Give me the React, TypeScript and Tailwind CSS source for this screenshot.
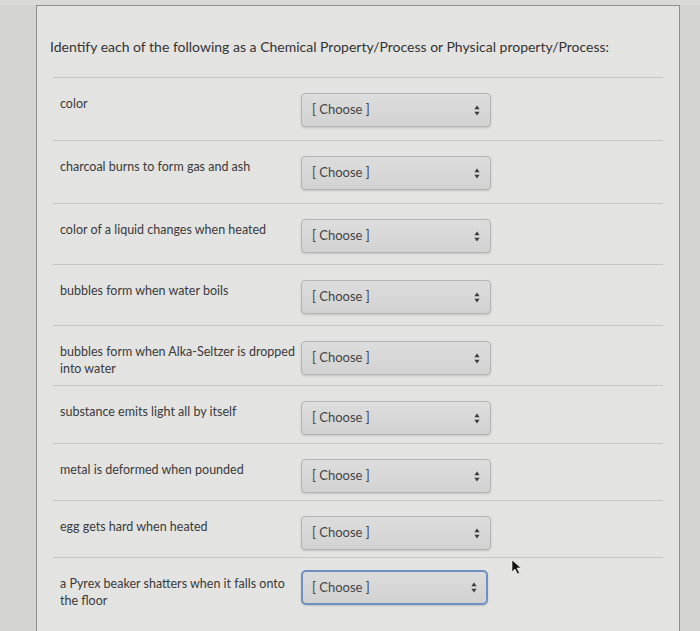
import React from 'react';

const rows: { label: string; h: string }[] = [
  { label: 'color', h: 'h-[63px]' },
  { label: 'charcoal burns to form gas and ash', h: 'h-[63px]' },
  { label: 'color of a liquid changes when heated', h: 'h-[61px]' },
  { label: 'bubbles form when water boils', h: 'h-[61px]' },
  { label: 'bubbles form when Alka-Seltzer is dropped into water', h: 'h-[60px]' },
  { label: 'substance emits light all by itself', h: 'h-[58px]' },
  { label: 'metal is deformed when pounded', h: 'h-[57px]' },
  { label: 'egg gets hard when heated', h: 'h-[57px]' },
  { label: 'a Pyrex beaker shatters when it falls onto the floor', h: 'h-[70px]' },
];

const Arrows = () => (
  <svg width="6" height="11" viewBox="0 0 6 11" className="shrink-0">
    <path d="M3 0.5 L5.6 4.3 L0.4 4.3 Z" fill="#3c3c3c" />
    <path d="M3 10.5 L5.6 6.7 L0.4 6.7 Z" fill="#3c3c3c" />
  </svg>
);

const ChooseSelect = ({ focused }: { focused?: boolean }) => (
  <div
    className={
      focused
        ? 'mt-[12px] flex h-[35px] w-[187px] items-center justify-between rounded-[5px] border-2 border-[#6f8fc4] bg-gradient-to-b from-[#dcdcdc] to-[#d1d1d1] pl-[9px] pr-[9px] shadow-[0_1px_2px_rgba(0,0,0,0.15)]'
        : 'mt-[15px] flex h-[34px] w-[190px] items-center justify-between rounded-[4px] border border-[#b4b4b4] bg-gradient-to-b from-[#dddddd] to-[#d2d2d2] pl-[10px] pr-[10px] shadow-[0_1px_2px_rgba(0,0,0,0.15)]'
    }
  >
    <span className="text-[13px] text-[#444]">[ Choose ]</span>
    <Arrows />
  </div>
);

export default function App() {
  return (
    <div
      className="relative h-[631px] w-[700px] overflow-hidden bg-[#d4d4d3]"
      style={{ fontFamily: 'Lato, "Open Sans", sans-serif' }}
    >
      <div className="h-[5px] bg-[#d9d9d8]" />
      <div className="ml-[36px] h-[626px] w-[644px] border-x border-t border-[#8f8f8f] bg-[#e3e3e2]">
        <div className="px-[13px] pt-[31px] text-[14px] leading-[20px] text-[#333]">
          Identify each of the following as a Chemical Property/Process or Physical property/Process:
        </div>
        <div className="mx-[16px] mt-[20px]">
          {rows.map((row, i) => (
            <div key={row.label} className={`flex border-t border-[#c6c6c5] ${row.h}`}>
              <div className="w-[248px] shrink-0 pl-[7px] pt-[17px] text-[12.5px] leading-[17px] text-[#3a3a3a]">
                {row.label}
              </div>
              <ChooseSelect focused={i === rows.length - 1} />
            </div>
          ))}
        </div>
      </div>
      <svg
        className="absolute left-[511px] top-[559px]"
        width="11"
        height="16"
        viewBox="0 0 11 16"
      >
        <path d="M1 1 L1 13 L4 10 L6.5 15 L8.5 14 L6 9 L10 9 Z" fill="#111" stroke="#fff" strokeWidth="0.6" />
      </svg>
    </div>
  );
}
